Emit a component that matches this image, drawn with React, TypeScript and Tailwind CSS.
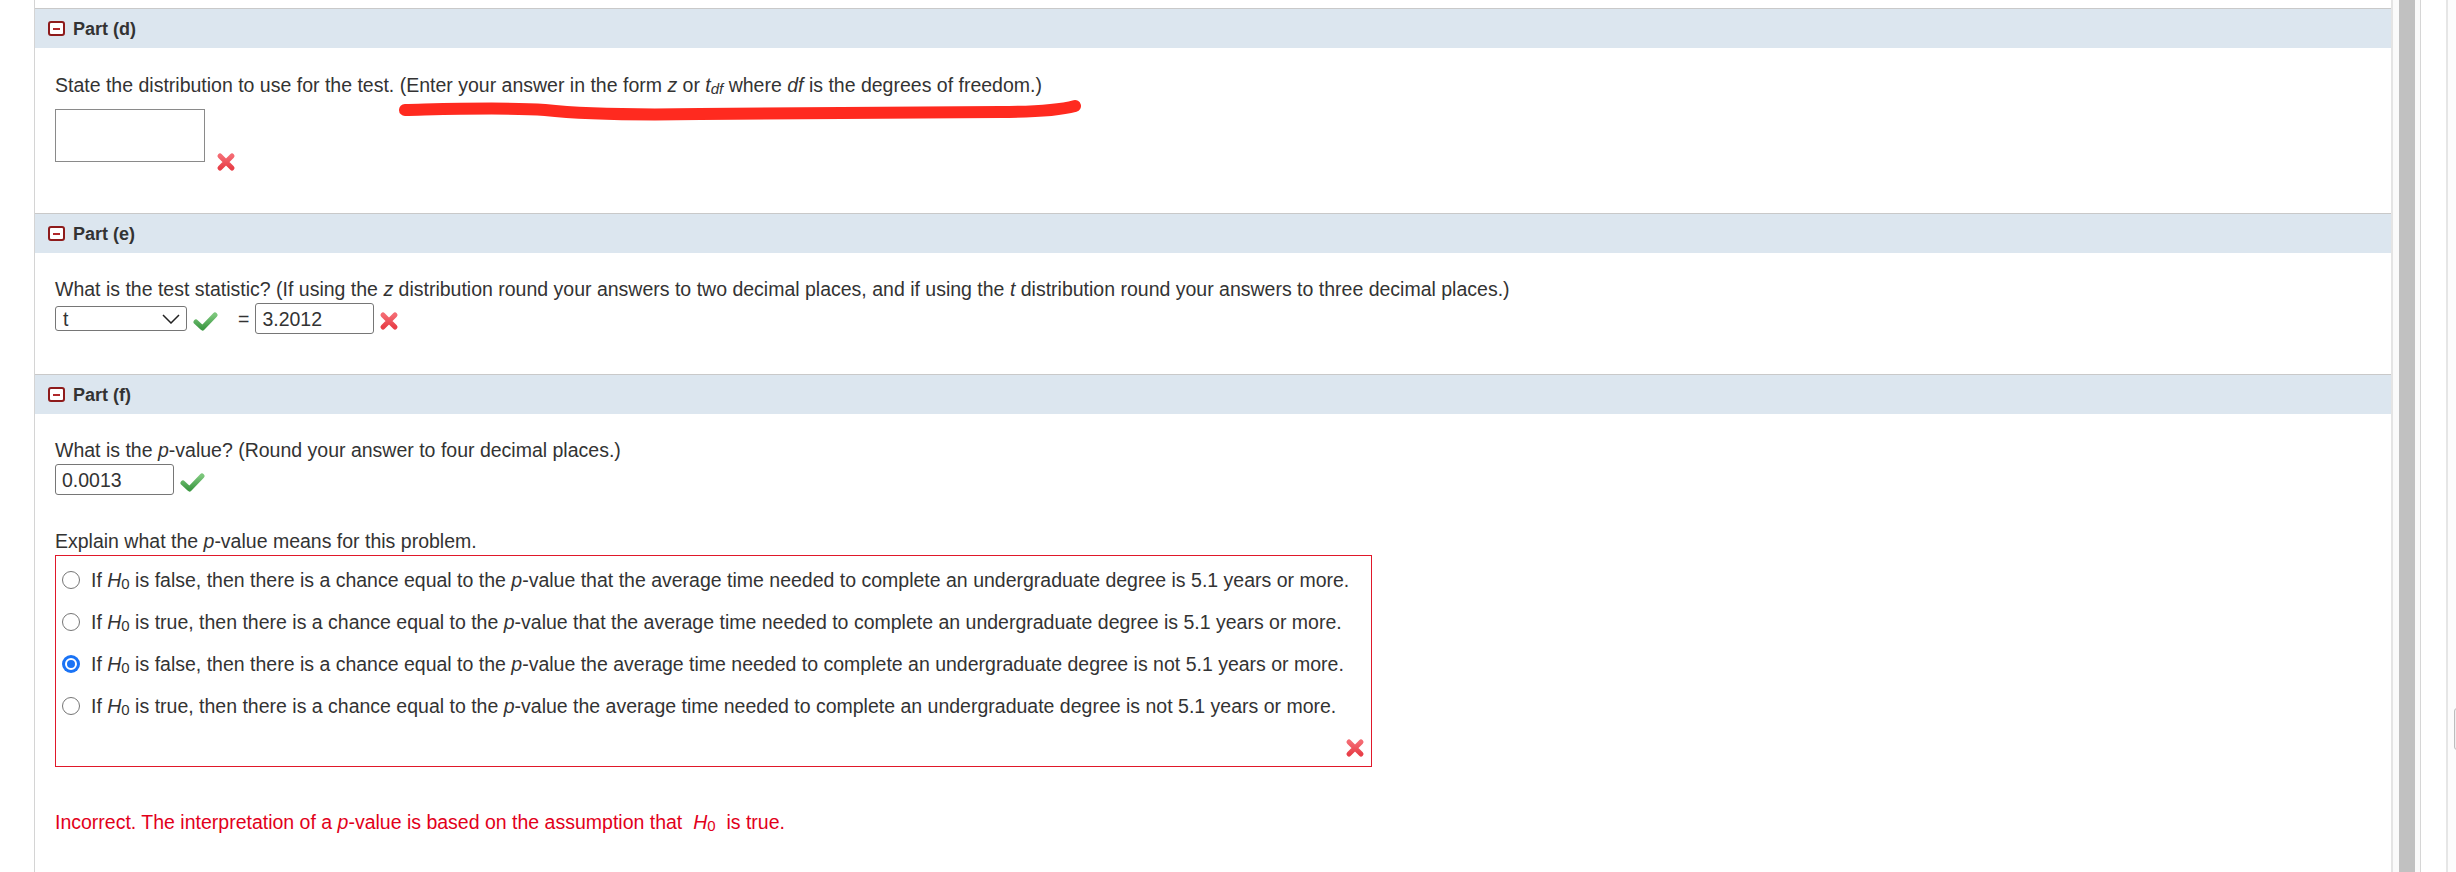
import React from 'react';

const font = "font-['Liberation_Sans',Arial,Helvetica,sans-serif]";

function MinusBox() {
  return (
    <span className="inline-flex w-[17px] h-[15px] items-center justify-center rounded-[3px] border-2 border-[#8e1b1b] bg-white">
      <span className="block w-[7px] h-[2px] bg-[#b0282a]" />
    </span>
  );
}

function PartHeader({ label }: { label: string }) {
  return (
    <div className="h-[40px] border-t border-[#c9c9c9] bg-[#dce6ef] flex items-center pl-[13px] gap-[8px]">
      <MinusBox />
      <span className="text-[18px] font-bold text-[#333]">{label}</span>
    </div>
  );
}

function RedX({ className = '' }: { className?: string }) {
  return (
    <svg width="20" height="20" viewBox="0 0 20 20" className={className}>
      <defs>
        <linearGradient id="xg" x1="0" y1="0" x2="0" y2="1">
          <stop offset="0" stopColor="#f46a72" />
          <stop offset="1" stopColor="#e83f48" />
        </linearGradient>
      </defs>
      <path d="M4 4 L16 16 M16 4 L4 16" stroke="url(#xg)" strokeWidth="5" strokeLinecap="round" />
    </svg>
  );
}

function Check({ className = '' }: { className?: string }) {
  return (
    <svg width="25" height="19" viewBox="0 0 25 19" className={className}>
      <defs>
        <linearGradient id="cg" x1="0" y1="0" x2="0" y2="1">
          <stop offset="0" stopColor="#7bc67b" />
          <stop offset="1" stopColor="#3f9a45" />
        </linearGradient>
      </defs>
      <path d="M3 10 L9.5 16 L22 3" fill="none" stroke="url(#cg)" strokeWidth="5" strokeLinecap="round" strokeLinejoin="round" />
    </svg>
  );
}

function H0({ red = false }: { red?: boolean }) {
  return (
    <span className={red ? 'text-[#e2001a]' : ''}>
      <i>H</i>
      <sub className="text-[15px] relative top-[2px] not-italic">0</sub>
    </span>
  );
}

function Radio({ checked = false }: { checked?: boolean }) {
  return checked ? (
    <span className="w-[18px] h-[18px] rounded-full bg-[#1a73f5] flex items-center justify-center">
      <span className="w-[12px] h-[12px] rounded-full border-[2px] border-white bg-[#1a73f5]" />
    </span>
  ) : (
    <span className="w-[18px] h-[18px] rounded-full border-[1.5px] border-[#767676] bg-white" />
  );
}

const options = [
  { truth: 'false', not: false, that: true, checked: false },
  { truth: 'true', not: false, that: true, checked: false },
  { truth: 'false', not: true, that: false, checked: true },
  { truth: 'true', not: true, that: false, checked: false },
];

export default function App() {
  return (
    <div className={`${font} w-[2456px] h-[872px] bg-white flex relative overflow-hidden text-[19.5px] leading-[22px] text-[#333]`}>
      <div className="w-[34px] shrink-0" />
      <div className="w-[2357px] shrink-0 border-l border-[#d4d4d4] pt-[8px] flex flex-col">
        {/* Part (d) */}
        <PartHeader label="Part (d)" />
        <div className="h-[165px] pl-[20px] pt-[26px]">
          <p>
            State the distribution to use for the test. (Enter your answer in the form <i>z</i> or <i>t</i>
            <sub className="text-[15px] relative top-[2px]"><i>df</i></sub> where <i>df</i> is the degrees of freedom.)
          </p>
          <div className="flex items-start mt-[13px] gap-[11px]">
            <div className="w-[150px] h-[53px] border border-[#8a8a8a] bg-white" />
            <RedX className="mt-[43px]" />
          </div>
        </div>

        {/* Part (e) */}
        <PartHeader label="Part (e)" />
        <div className="h-[121px] pl-[20px] pt-[25px]">
          <p>
            What is the test statistic? (If using the <i>z</i> distribution round your answers to two decimal places, and if using the <i>t</i> distribution round your answers to three decimal places.)
          </p>
          <div className="flex items-center mt-[3px] h-[31px]">
            <div className="w-[132px] h-[25px] border border-[#767676] rounded-[3px] flex items-center justify-between pl-[7px] pr-[6px] bg-white">
              <span>t</span>
              <svg width="18" height="10" viewBox="0 0 18 10">
                <path d="M1 1 L9 9 L17 1" fill="none" stroke="#222" strokeWidth="1.5" />
              </svg>
            </div>
            <Check className="ml-[6px] mt-[6px]" />
            <span className="ml-[20px]">=</span>
            <div className="ml-[6px] w-[119px] h-[31px] border border-[#767676] rounded-[3px] flex items-center pl-[6px] bg-white">3.2012</div>
            <RedX className="ml-[5px] mt-[4px]" />
          </div>
        </div>

        {/* Part (f) */}
        <PartHeader label="Part (f)" />
        <div className="flex-1 pl-[20px] pt-[25px]">
          <p>
            What is the <i>p</i>-value? (Round your answer to four decimal places.)
          </p>
          <div className="flex items-center mt-[3px]">
            <div className="w-[119px] h-[31px] border border-[#767676] rounded-[3px] flex items-center pl-[6px] bg-white">0.0013</div>
            <Check className="ml-[6px] mt-[6px]" />
          </div>
          <p className="mt-[35px]">
            Explain what the <i>p</i>-value means for this problem.
          </p>
          <div className="mt-[3px] w-[1317px] h-[212px] border border-[#e0182a] pt-[3px] flex flex-col">
            {options.map((o, i) => (
              <div key={i} className="h-[42px] flex items-center pl-[6px] gap-[11px]">
                <Radio checked={o.checked} />
                <span>
                  If <H0 /> is {o.truth}, then there is a chance equal to the <i>p</i>-value {o.that ? 'that ' : ''}the average time needed to complete an undergraduate degree is {o.not ? 'not ' : ''}5.1 years or more.
                </span>
              </div>
            ))}
            <div className="flex-1 flex items-end justify-end pr-[6px] pb-[8px]">
              <RedX />
            </div>
          </div>
          <p className="mt-[44px] text-[#e2001a]">
            Incorrect. The interpretation of a <i>p</i>-value is based on the assumption that&nbsp; <H0 red />&nbsp; is true.
          </p>
        </div>
      </div>

      {/* right edge strips */}
      <div className="w-[2px] shrink-0 bg-[#e4e4e4]" />
      <div className="w-[6px] shrink-0 bg-[#fafafa]" />
      <div className="w-[16px] shrink-0 bg-[#c1c1c1]" />
      <div className="w-[5px] shrink-0 bg-[#fafafa]" />
      <div className="w-[1px] shrink-0 bg-[#d6d6d6]" />
      <div className="w-[25px] shrink-0 bg-white" />
      <div className="w-[2px] shrink-0 bg-[#e6e6e6]" />
      <div className="flex-1 bg-[#fcfcfc] relative">
        <div className="absolute left-[6px] top-[708px] w-[6px] h-[42px] rounded-l-[3px] border border-[#bdbdbd] bg-[#f0f0f0]" />
      </div>

      {/* hand-drawn red annotation */}
      <svg className="absolute left-0 top-0 pointer-events-none" width="2456" height="872">
        <path
          d="M405 110 C450 109 505 107 545 110 C590 115 640 115 700 114 C800 113 900 112 1000 112 C1040 112 1060 110 1075 106"
          fill="none"
          stroke="#ff2a1f"
          strokeWidth="12"
          strokeLinecap="round"
        />
      </svg>
    </div>
  );
}
